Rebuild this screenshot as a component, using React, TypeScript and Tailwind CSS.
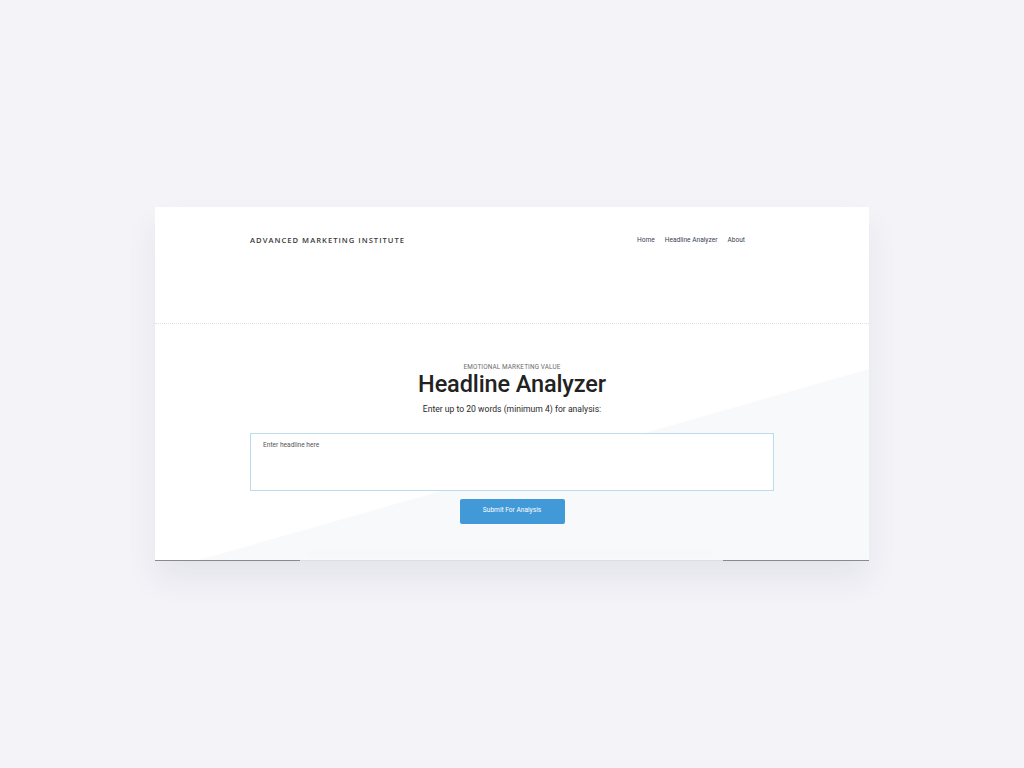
import React from "react";

export default function App() {
  return (
    <div
      className="min-h-screen w-full bg-[#f3f3f8] flex items-center justify-center"
      style={{ fontFamily: "Roboto, 'Open Sans', sans-serif" }}
    >
      <div className="relative w-[714px] bg-white shadow-[0_18px_30px_rgba(40,40,70,0.07)]">
        {/* header */}
        <header className="h-[117px] border-b border-dotted border-[#e2e2e6]">
          <div className="mx-auto w-[524px] pt-[28px] flex items-center justify-between">
            <div
              className="text-[7.6px] font-semibold tracking-[0.135em] text-[#3a3a3a]"
              style={{ fontFamily: "'Open Sans', sans-serif" }}
            >
              ADVANCED MARKETING INSTITUTE
            </div>
            <nav className="flex items-center gap-[10px] pr-[29px] text-[6.6px] text-[#3b4252]">
              <span>Home</span>
              <span>Headline Analyzer</span>
              <span>About</span>
            </nav>
          </div>
        </header>

        {/* main */}
        <main className="relative h-[237px] border-b border-[#878a94] overflow-visible">
          <div className="absolute inset-0 bg-[#f8f9fb] [clip-path:polygon(44px_100%,100%_45px,100%_100%)]" />
          <div className="relative flex flex-col items-center pt-[40px]">
            <div className="text-[6.4px] uppercase tracking-[0.02em] text-[#6b6b6b] leading-none">
              Emotional Marketing Value
            </div>
            <h1 className="mt-[3px] text-[23.5px] font-medium text-[#222] leading-none tracking-[-0.005em]">
              Headline Analyzer
            </h1>
            <p className="mt-[8px] text-[8.6px] text-[#2a2a2a] leading-none">
              Enter up to 20 words (minimum 4) for analysis:
            </p>
            <div className="mt-[19px] w-[524px] h-[58px] border-[1.5px] border-[#bcdbec] bg-white px-[12px] pt-[8px]">
              <div className="text-[6.6px] text-[#555] leading-none">Enter headline here</div>
            </div>
            <button className="mt-[8px] w-[105px] h-[25px] rounded-[2px] bg-[#4299d8] text-white text-[6.6px]">
              Submit For Analysis
            </button>
          </div>
          {/* floating element shadow at bottom */}
          <div className="absolute left-[145px] bottom-[-1px] w-[423px] h-[1px] bg-[#dedee2] shadow-[0_-8px_16px_rgba(0,0,0,0.09)]" />
        </main>
      </div>
    </div>
  );
}
